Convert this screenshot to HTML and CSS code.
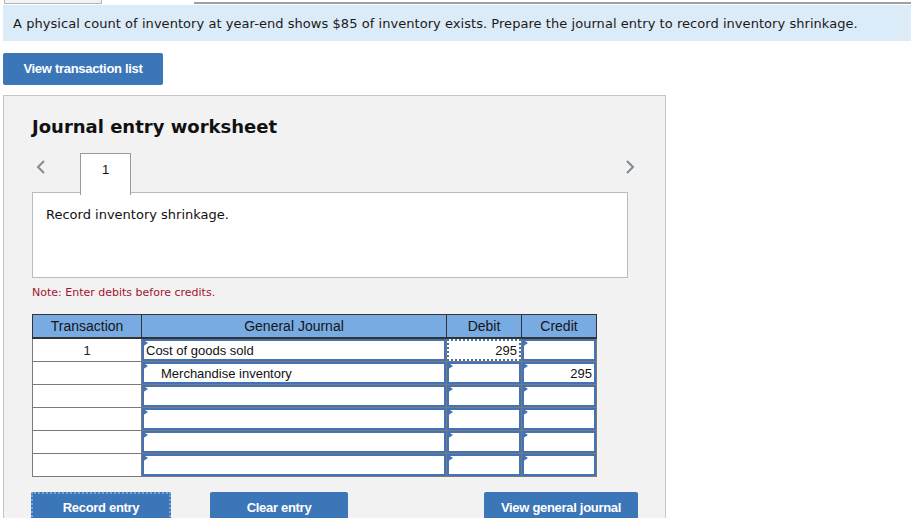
FILE: index.html
```html
<!DOCTYPE html>
<html lang="en">
<head>
    <meta charset="UTF-8">
    <title>Journal entry worksheet</title>
    <link rel="stylesheet" href="styles.css">
</head>
<body>
    <!-- question tabs strip -->
    <div class="tab-strip">
        <div class="strip-tab"></div>
        <div class="strip-tab current"></div>
        <div class="strip-rest"></div>
    </div>

    <div class="question">A physical count of inventory at year-end shows $85 of inventory exists. Prepare the journal entry to record inventory shrinkage.</div>

    <button class="btn btn-list">View transaction list</button>

    <div class="worksheet">
        <h2 class="ws-title">Journal entry worksheet</h2>

        <div class="ws-tabs">
            <span class="arrow">
                <svg width="11" height="14" viewBox="0 0 11 14"><path d="M9 1 L3 7 L9 13" fill="none" stroke="#8a8a8a" stroke-width="2"/></svg>
            </span>
            <div class="ws-tab">1</div>
            <span class="arrow right">
                <svg width="11" height="14" viewBox="0 0 11 14"><path d="M2 1 L8 7 L2 13" fill="none" stroke="#7d8a99" stroke-width="2"/></svg>
            </span>
        </div>

        <div class="ws-desc">Record inventory shrinkage.</div>

        <p class="note">Note: Enter debits before credits.</p>

        <table class="journal">
            <thead>
                <tr>
                    <th class="c-trans">Transaction</th>
                    <th class="c-acct">General Journal</th>
                    <th class="c-num">Debit</th>
                    <th class="c-num">Credit</th>
                </tr>
            </thead>
            <tbody>
                <tr>
                    <td class="trans">1</td>
                    <td><div class="inp">Cost of goods sold</div></td>
                    <td><div class="inp num focus">295</div></td>
                    <td><div class="inp num"></div></td>
                </tr>
                <tr>
                    <td class="trans"></td>
                    <td><div class="inp indent">Merchandise inventory</div></td>
                    <td><div class="inp num"></div></td>
                    <td><div class="inp num">295</div></td>
                </tr>
                <tr>
                    <td class="trans"></td>
                    <td><div class="inp"></div></td>
                    <td><div class="inp num"></div></td>
                    <td><div class="inp num"></div></td>
                </tr>
                <tr>
                    <td class="trans"></td>
                    <td><div class="inp"></div></td>
                    <td><div class="inp num"></div></td>
                    <td><div class="inp num"></div></td>
                </tr>
                <tr>
                    <td class="trans"></td>
                    <td><div class="inp"></div></td>
                    <td><div class="inp num"></div></td>
                    <td><div class="inp num"></div></td>
                </tr>
                <tr>
                    <td class="trans"></td>
                    <td><div class="inp"></div></td>
                    <td><div class="inp num"></div></td>
                    <td><div class="inp num"></div></td>
                </tr>
            </tbody>
        </table>

        <div class="ws-actions">
            <button class="btn btn-record">Record entry</button>
            <button class="btn btn-clear">Clear entry</button>
            <button class="btn btn-journal">View general journal</button>
        </div>
    </div>
</body>
</html>
```

FILE: styles.css
```css
/* Journal entry worksheet */
:root {
    --btn-blue: #3b76b8;
    --banner-bg: #dcebf8;
    --panel-bg: #f2f2f2;
    --panel-border: #c6c6c6;
    --head-bg: #78abe2;
    --input-blue: #4373b4;
    --note-red: #a3132f;
}

body {
    margin: 0;
    padding: 0;
    font-family: "DejaVu Sans", Verdana, sans-serif;
    color: #111;
    background: #fff;
}

.tab-strip {
    display: flex;
    height: 5px;
}

.strip-tab {
    width: 96px;
    height: 3px;
    margin-left: 4px;
    background: #f2f2f2;
    border: 1px solid #b5b5b5;
    border-top: none;
}

.strip-tab.current {
    width: 92px;
    margin-left: 0;
    background: #fff;
    border: none;
}

.strip-rest {
    flex: 1;
    border-bottom: 2px solid #a0a0a0;
    height: 2px;
}

.question {
    margin-left: 3px;
    height: 34px;
    padding: 2px 10px 0 10px;
    line-height: 34px;
    font-size: 13px;
    letter-spacing: 0.05px;
    background: var(--banner-bg);
    color: #1a1a1a;
}

.btn {
    display: inline-block;
    border: none;
    border-radius: 2px;
    background: var(--btn-blue);
    color: #fff;
    font-family: "Liberation Sans", Arial, sans-serif;
    font-size: 13px;
    font-weight: bold;
    letter-spacing: -0.3px;
    cursor: pointer;
}

.btn-list {
    margin: 12px 0 10px 3px;
    width: 160px;
    height: 32px;
    padding-bottom: 2px;
}

.worksheet {
    margin-left: 3px;
    width: 633px;
    height: 440px;
    padding: 0 0 0 28px;
    background: var(--panel-bg);
    border: 1px solid var(--panel-border);
}

.ws-title {
    margin: 20px 0 0 0;
    font-size: 18px;
    font-weight: bold;
    line-height: 22px;
    color: #111;
}

.ws-tabs {
    display: flex;
    align-items: center;
    margin-top: 14px;
    width: 596px;
    height: 41px;
}

.arrow {
    display: flex;
    width: 11px;
    margin-left: 3px;
    margin-top: -12px;
}

.arrow.right {
    margin-left: auto;
    margin-right: -8px;
}

.ws-tab {
    width: 49px;
    height: 41px;
    margin-left: 34px;
    margin-bottom: -2px;
    background: #fff;
    border: 1px solid #9a9a9a;
    border-bottom: none;
    font-family: "Liberation Sans", Arial, sans-serif;
    font-size: 13px;
    text-align: center;
    line-height: 32px;
    position: relative;
    z-index: 1;
}

.ws-desc {
    width: 568px;
    height: 84px;
    padding: 0 13px;
    background: #fff;
    border: 1px solid #bcbcbc;
    font-size: 13px;
    line-height: 44px;
    margin-top: -1px;
}

.note {
    margin: 8px 0 0 0;
    font-size: 11px;
    line-height: 14px;
    color: var(--note-red);
}

.journal {
    margin-top: 14px;
    width: 565px;
    border-collapse: collapse;
    font-family: "Liberation Sans", Arial, sans-serif;
    font-size: 13px;
    background: #fff;
}

.journal th {
    height: 22px;
    padding: 0;
    background: var(--head-bg);
    border: 1px solid #333;
    border-bottom: 2px solid #333;
    font-size: 14px;
    font-weight: normal;
    color: #151515;
}

.c-trans { width: 108px; }
.c-acct { width: 304px; }
.c-num { width: 74px; }

.journal td {
    height: 22px;
    padding: 0;
    border: 1px solid #7a7a7a;
}

.journal td.trans {
    text-align: center;
    color: #222;
}

.inp {
    position: relative;
    box-sizing: border-box;
    height: 22px;
    padding: 1px 2px 0 2px;
    border: 2px solid var(--input-blue);
    color: #111;
    font-size: 13px;
    line-height: 17px;
}

/* small triangle marker at the corner of each input */
.inp::before {
    content: "";
    position: absolute;
    top: -2px;
    left: -2px;
    border-left: 6px solid var(--input-blue);
    border-top: 4px solid transparent;
    border-bottom: 4px solid transparent;
}

.inp.num {
    text-align: right;
}

.inp.indent {
    padding-left: 17px;
}

.inp.focus {
    border-style: dotted;
}

.inp.focus::before {
    display: none;
}

.ws-actions {
    display: flex;
    margin-top: 15px;
    margin-left: -1px;
}

.ws-actions .btn {
    height: 32px;
    line-height: 32px;
    padding: 0;
}

.btn-record {
    width: 140px;
    outline: 2px dotted #7da3d4;
    outline-offset: -2px;
}

.btn-clear {
    width: 138px;
    margin-left: 39px;
}

.btn-journal {
    width: 154px;
    margin-left: 136px;
}
```
